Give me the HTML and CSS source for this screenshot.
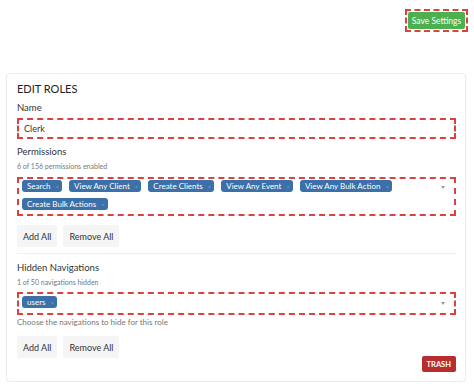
FILE: index.html
```html
<!DOCTYPE html>
<html lang="en">
<head>
    <meta charset="UTF-8">
    <title>Edit Roles</title>
    <link rel="stylesheet" href="styles.css">
</head>
<body>
    <div class="topbar">
        <div class="marked save-wrap">
            <button class="btn-save">Save Settings</button>
        </div>
    </div>

    <div class="card">
        <h2 class="title">EDIT ROLES</h2>

        <!-- Name -->
        <div class="label">Name</div>
        <div class="marked field-text">Clerk</div>

        <!-- Permissions -->
        <div class="label label-gap">Permissions</div>
        <div class="sub">6 of 156 permissions enabled</div>
        <div class="marked field-select perms">
            <div class="tags">
                <span class="tag">Search<i>×</i></span>
                <span class="tag">View Any Client<i>×</i></span>
                <span class="tag">Create Clients<i>×</i></span>
                <span class="tag">View Any Event<i>×</i></span>
                <span class="tag">View Any Bulk Action<i>×</i></span>
                <span class="tag">Create Bulk Actions<i>×</i></span>
            </div>
            <span class="caret"></span>
        </div>
        <div class="actions">
            <button class="btn-light">Add All</button>
            <button class="btn-light">Remove All</button>
        </div>

        <hr class="divider">

        <!-- Hidden Navigations -->
        <div class="label label-gap2">Hidden Navigations</div>
        <div class="sub">1 of 50 navigations hidden</div>
        <div class="marked field-select navs">
            <div class="tags">
                <span class="tag">users<i>×</i></span>
            </div>
            <span class="caret"></span>
        </div>
        <div class="help">Choose the navigations to hide for this role</div>
        <div class="actions actions-2">
            <button class="btn-light">Add All</button>
            <button class="btn-light">Remove All</button>
        </div>

        <div class="footer">
            <button class="btn-trash">TRASH</button>
        </div>
    </div>
</body>
</html>
```

FILE: styles.css
```css
body {
    margin: 0;
    font-family: Lato, "Noto Sans", Arial, sans-serif;
    color: #333;
    background-color: #fff;
}

button {
    font-family: inherit;
    border: none;
    cursor: pointer;
}

.topbar {
    display: flex;
    justify-content: flex-end;
    padding: 9px 6px 0 0;
    height: 64px;
}

.marked {
    border: 2px dashed #d9423f;
    box-sizing: border-box;
}

.save-wrap {
    display: flex;
    padding: 1px;
    height: 23px;
    width: 63px;
}

.btn-save {
    flex: 1;
    background-color: #4caf50;
    color: #fff;
    font-size: 8.5px;
    padding: 0;
    border-radius: 2px;
}

.card {
    margin: 0 8px 0 6px;
    border: 1px solid #ececec;
    border-radius: 4px;
    padding: 7px 9px 9px 10px;
    box-shadow: 0 1px 2px rgba(0,0,0,0.04);
}

.title {
    margin: 0;
    font-size: 11px;
    font-weight: normal;
    line-height: 16px;
    color: #222;
}

.label {
    margin-top: 4px;
    font-size: 9.5px;
    line-height: 14px;
    color: #333;
}

.label-gap {
    margin-top: 6px;
}

.label-gap2 {
    margin-top: 7px;
}

.sub {
    margin-top: 1px;
    font-size: 7px;
    line-height: 12px;
    color: #777;
}

.field-text {
    margin-top: 3px;
    height: 21px;
    padding: 0 5px;
    font-size: 9px;
    line-height: 17px;
    color: #333;
}

.field-select {
    position: relative;
    display: flex;
    padding: 1px 20px 4px 3px;
}

.perms {
    margin-top: 5px;
    height: 39px;
}

.navs {
    margin-top: 4px;
    height: 23px;
    padding-top: 2px;
}

.tags {
    display: flex;
    flex-wrap: wrap;
    gap: 6px 7px;
}

.tag {
    display: inline-flex;
    align-items: center;
    height: 12px;
    padding: 0 3px 0 5px;
    background-color: #3b70a8;
    color: #fff;
    font-size: 8px;
    border-radius: 3px;
}

.tag i {
    font-style: normal;
    margin-left: 5px;
    font-size: 6px;
    color: #7d9fc4;
}

.caret {
    position: absolute;
    right: 9px;
    top: 7px;
    width: 0;
    height: 0;
    border-left: 2.5px solid transparent;
    border-right: 2.5px solid transparent;
    border-top: 3px solid #999;
}

.navs .caret {
    top: 8px;
}

.actions {
    display: flex;
    gap: 6px;
    margin-top: 9px;
}

.actions-2 {
    margin-top: 8px;
}

.btn-light {
    height: 22px;
    padding: 0 6px;
    background-color: #f5f5f5;
    color: #333;
    font-size: 9px;
    border-radius: 2px;
}

.divider {
    margin: 6px 0 0 0;
    border: none;
    border-top: 1px solid #f0f0f0;
}

.help {
    margin-top: 1px;
    font-size: 8px;
    line-height: 12px;
    color: #777;
}

.footer {
    display: flex;
    justify-content: flex-end;
    margin-top: -2px;
}

.btn-trash {
    height: 16px;
    padding: 0 5px;
    background-color: #b82d2d;
    color: #fff;
    font-size: 7.5px;
    font-weight: bold;
    border-radius: 2px;
}
```
